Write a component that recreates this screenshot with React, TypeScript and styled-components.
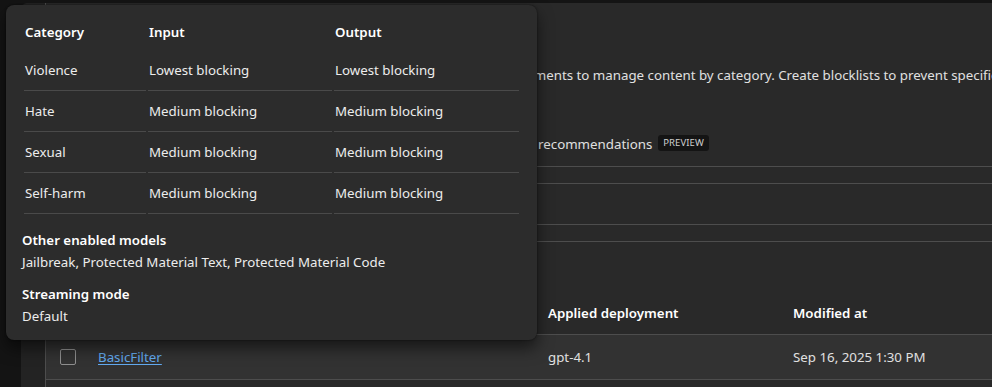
import React from "react";
import styled, { createGlobalStyle } from "styled-components";

const GlobalStyle = createGlobalStyle`
  html, body {
    margin: 0;
    padding: 0;
    background: #141414;
    height: 387px;
    overflow: hidden;
  }
  body {
    font-family: "Noto Sans", "Open Sans", sans-serif;
    font-size: 13.3px;
    color: #e8e8e8;
  }
  * { box-sizing: border-box; }
`;

const Page = styled.div`
  position: relative;
  height: 387px;
  padding-top: 3px;
`;

const Main = styled.div`
  display: flex;
  height: 384px;
  margin-left: 21px;
  background: #232323;
  border-top-left-radius: 6px;
  overflow: hidden;
`;

const Gutter = styled.div`
  width: 24px;
  flex: none;
`;

const Content = styled.div`
  flex: 1;
  display: flex;
  flex-direction: column;
  background: #292929;
  border-left: 1px solid #4d4d4d;
  min-width: 0;
`;

const Intro = styled.div`
  padding: 20px 0 0 20px;
`;

const Title = styled.h1`
  margin: 0 0 14px;
  font-size: 20px;
  line-height: 28px;
  font-weight: 600;
  color: #ffffff;
`;

const Description = styled.p`
  margin: 0;
  line-height: 20px;
  white-space: nowrap;
  color: #e0e0e0;
`;

const TabList = styled.div`
  display: flex;
  align-items: center;
  gap: 33px;
  height: 45px;
  margin-top: 37px;
  padding-left: 16px;
  border-bottom: 1px solid #4d4d4d;
`;

const Tab = styled.div`
  display: flex;
  align-items: center;
  gap: 6px;
  color: #e0e0e0;
  white-space: nowrap;
`;

const Badge = styled.span`
  display: inline-block;
  padding: 0 5px;
  height: 16px;
  line-height: 16px;
  font-size: 9.5px;
  letter-spacing: 0.1px;
  color: #cfcfcf;
  background: #141414;
  border-radius: 3px;
  margin-top: -3px;
`;

const Band = styled.div<{ $h: number; $line?: boolean }>`
  height: ${(p) => p.$h}px;
  flex: none;
  border-bottom: ${(p) => (p.$line ? "1px solid #4d4d4d" : "none")};
`;

const Grid = styled.div<{ $hover?: boolean; $h: number }>`
  display: grid;
  grid-template-columns: 52px 450px 245px 1fr;
  align-items: center;
  height: ${(p) => p.$h}px;
  flex: none;
  border-bottom: 1px solid #4d4d4d;
  background: ${(p) => (p.$hover ? "#323232" : "transparent")};
  white-space: nowrap;
`;

const HeadCell = styled.div`
  font-weight: 600;
  color: #ffffff;
`;

const Cell = styled.div`
  color: #e0e0e0;
`;

const CheckCell = styled.div`
  padding-left: 14px;
  display: flex;
  align-items: center;
`;

const Checkbox = styled.span`
  width: 16px;
  height: 16px;
  border: 1px solid #8f8f8f;
  border-radius: 2px;
`;

const Link = styled.a`
  color: #62aaf0;
  text-decoration: underline;
  text-underline-offset: 2px;
`;

/* overlay card */
const Popover = styled.div`
  position: absolute;
  left: 6px;
  top: 5px;
  width: 531px;
  height: 335px;
  padding: 9px 17px 0 16px;
  background: #2c2c2c;
  border-radius: 8px;
  box-shadow: 0 0 2px rgba(0, 0, 0, 0.6), 0 8px 16px rgba(0, 0, 0, 0.55);
`;

const FilterTable = styled.div`
  display: grid;
  grid-template-columns: 122px 184px 185px;
  column-gap: 2px;
  margin-left: 2px;
`;

const FHead = styled.div`
  height: 36px;
  display: flex;
  align-items: center;
  padding-left: 1px;
  font-weight: 600;
  color: #ffffff;
`;

const FCell = styled.div`
  height: 41px;
  display: flex;
  align-items: center;
  padding-left: 1px;
  border-bottom: 1px solid #4a4a4a;
  color: #ececec;
`;

const Section = styled.div<{ $top: number }>`
  margin-top: ${(p) => p.$top}px;
  line-height: 22px;
`;

const Label = styled.div`
  font-weight: 600;
  color: #ffffff;
`;

const Value = styled.div`
  color: #ececec;
`;

const filters = [
  ["Violence", "Lowest blocking", "Lowest blocking"],
  ["Hate", "Medium blocking", "Medium blocking"],
  ["Sexual", "Medium blocking", "Medium blocking"],
  ["Self-harm", "Medium blocking", "Medium blocking"],
];

const tabs = ["Content filters", "Blocklists", "Risks + alerts"];

export default function App() {
  return (
    <>
      <GlobalStyle />
      <Page>
        <Main>
          <Gutter />
          <Content>
            <Intro>
              <Title>Guardrails + controls</Title>
              <Description>
                Use content filters with configurable severity thresholds and other filter
                elements to manage content by category. Create blocklists to prevent specific
                words or patterns from being used.
              </Description>
            </Intro>
            <TabList>
              {tabs.map((t) => (
                <Tab key={t}>{t}</Tab>
              ))}
              <Tab>
                Safety system message recommendations <Badge>PREVIEW</Badge>
              </Tab>
            </TabList>
            <Band $h={17} $line />
            <Band $h={41} $line />
            <Band $h={17} $line />
            <Band $h={50} />
            <Grid $h={43}>
              <CheckCell />
              <HeadCell>Name</HeadCell>
              <HeadCell>Applied deployment</HeadCell>
              <HeadCell>Modified at</HeadCell>
            </Grid>
            <Grid $h={45} $hover>
              <CheckCell>
                <Checkbox />
              </CheckCell>
              <Cell>
                <Link>BasicFilter</Link>
              </Cell>
              <Cell>gpt-4.1</Cell>
              <Cell>Sep 16, 2025 1:30 PM</Cell>
            </Grid>
          </Content>
        </Main>

        <Popover>
          <FilterTable>
            <FHead>Category</FHead>
            <FHead>Input</FHead>
            <FHead>Output</FHead>
            {filters.map((row) =>
              row.map((value, i) => <FCell key={row[0] + i}>{value}</FCell>)
            )}
          </FilterTable>
          <Section $top={15}>
            <Label>Other enabled models</Label>
            <Value>Jailbreak, Protected Material Text, Protected Material Code</Value>
          </Section>
          <Section $top={10}>
            <Label>Streaming mode</Label>
            <Value>Default</Value>
          </Section>
        </Popover>
      </Page>
    </>
  );
}
